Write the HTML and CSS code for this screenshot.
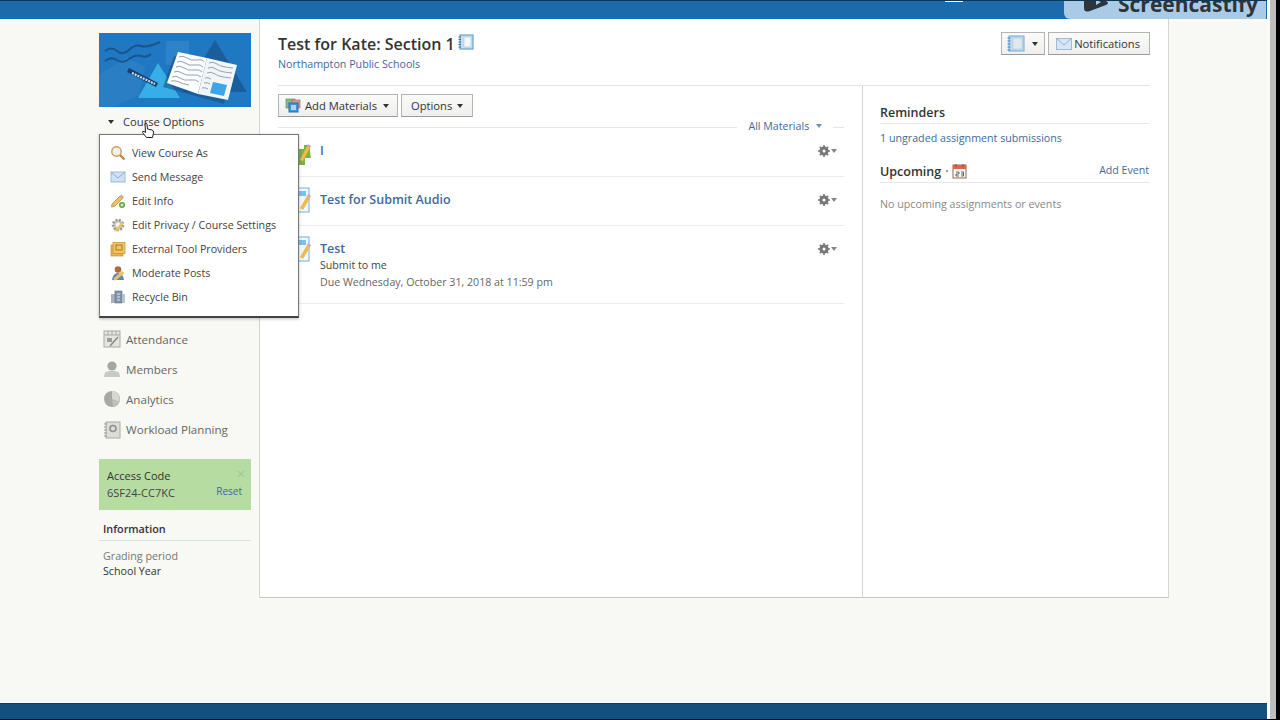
FILE: index.html
```html
<!DOCTYPE html>
<html lang="en">
<head>
  <meta charset="UTF-8">
  <title>Test for Kate: Section 1</title>
  <link rel="stylesheet" href="styles.css">
</head>
<body>
  <div class="window">
    <div class="page">
      <header class="topbar">
        <span class="topbar-mark"></span>
        <div class="recorder">
          <svg class="recorder-icon" width="30" height="14" viewBox="0 0 30 14"><path d="M2 -8 L24 1 Q28 3 24 5 L8 11 Q2 13 2 8 Z" fill="#2f3438"/><path d="M14 0 L19 2 L14 5 Z" fill="#a9cbe8"/></svg>
          <span class="recorder-name">Screencastify</span>
        </div>
      </header>

      <div class="content">
        <aside class="sidebar">
          <svg class="banner" width="152" height="74" viewBox="0 0 152 74">
            <rect width="152" height="74" fill="#1f78c1"/>
            <path d="M0 42 L28 24 L46 34 L40 62 L14 74 L0 74 Z" fill="#2a7fc4"/>
            <rect x="67" y="8" width="23" height="24" fill="#2d83c9"/>
            <path d="M116 7 L148 59 L84 59 Z" fill="#1a5f9c"/>
            <path d="M59 30 L81 65 L39 65 Z" fill="#38aee8"/>
            <path d="M6 18 Q12 13 18 18 T30 17 T42 13 T61 9" fill="none" stroke="#18558f" stroke-width="2"/>
            <path d="M6 28 Q12 23 18 27 T30 26 T42 23 T52 21" fill="none" stroke="#18558f" stroke-width="2"/>
            <path d="M29 37 L58 52" stroke="#12406f" stroke-width="4.5"/>
            <path d="M33 40 L56 51" stroke="#cfe0ee" stroke-width="2.2" stroke-dasharray="2 1"/>
            <path d="M79 19 L138 32 L129 67 L68 50 Z" fill="#14528a" opacity=".6" transform="translate(-4 4)"/>
            <path d="M79 19 L108 25 L99 61 L68 50 Z" fill="#fbfcfd"/>
            <path d="M108 25 L138 32 L129 67 L99 61 Z" fill="#f1f5f8"/>
            <g fill="none" stroke="#8d99a6" stroke-width=".9">
              <path d="M80 24 Q84 22 88 25 T98 27 T105 29"/>
              <path d="M78 29 Q82 27 86 30 T96 32 T104 34"/>
              <path d="M77 34 Q81 32 85 35 T95 37 T103 39"/>
              <path d="M75 39 Q79 37 83 40 T93 42 T102 44"/>
              <path d="M73 44 Q77 42 81 45 T91 47 T100 49"/>
              <path d="M72 48 Q76 47 80 49 T90 52"/>
              <path d="M110 30 Q114 28 118 31 T134 35"/>
              <path d="M109 35 Q113 33 117 36 T133 40"/>
              <path d="M108 40 Q112 38 116 41 T132 45"/>
              <path d="M106 45 Q109 44 112 46"/>
              <path d="M105 50 Q108 49 111 51"/>
              <path d="M103 55 Q106 54 109 56"/>
            </g>
            <path d="M114 49 L128 52 L125 63 L111 60 Z" fill="#3ea6e8"/>
          </svg>

          <div class="course-options">
            <span class="caret caret-dark"></span>
            <span>Course Options</span>
          </div>

          <div class="course-menu">
            <a class="menu-item">
              <svg width="16" height="16" viewBox="0 0 16 16"><circle cx="6.5" cy="6.5" r="4.7" fill="#f4f1e6" stroke="#c99a5b" stroke-width="1.4"/><path d="M10 10 L14.5 14.5" stroke="#b98a4c" stroke-width="2.4"/></svg>
              <span>View Course As</span>
            </a>
            <a class="menu-item">
              <svg width="16" height="16" viewBox="0 0 16 16"><rect x="1" y="3" width="14" height="10" fill="#cfe1f4" stroke="#9dbbd8"/><path d="M1 3 L8 9 L15 3" fill="none" stroke="#8fb0d0"/></svg>
              <span>Send Message</span>
            </a>
            <a class="menu-item">
              <svg width="16" height="16" viewBox="0 0 16 16"><path d="M2 11 L10 3 L13 5 L5 13 L1.5 14 Z" fill="#eec25f" stroke="#a8803a" stroke-width=".7"/><path d="M10 3 L11.5 1.5 L14 4 L13 5 Z" fill="#d7a1c6"/><circle cx="12" cy="12" r="3" fill="#5aa63a"/><path d="M10.5 12 H13.5 M12 10.5 V13.5" stroke="#fff" stroke-width="1"/></svg>
              <span>Edit Info</span>
            </a>
            <a class="menu-item">
              <svg width="16" height="16" viewBox="0 0 16 16"><circle cx="8" cy="8" r="5" fill="#c8c8c4" stroke="#9a9a96" stroke-width="2.6" stroke-dasharray="2 1.4"/><circle cx="8" cy="8" r="2.4" fill="#f2f2ee"/><path d="M5 13 L12 5 L14 6.5 L7 14 L4.5 14.5 Z" fill="#eec25f"/></svg>
              <span>Edit Privacy / Course Settings</span>
            </a>
            <a class="menu-item">
              <svg width="16" height="16" viewBox="0 0 16 16"><rect x="1" y="4" width="12" height="11" fill="#e5b54e" stroke="#c08f2e" stroke-width=".7"/><rect x="3" y="1.5" width="12" height="11" fill="#f0c463" stroke="#c08f2e" stroke-width=".7"/><rect x="6" y="4" width="6" height="5" fill="none" stroke="#a87a20"/></svg>
              <span>External Tool Providers</span>
            </a>
            <a class="menu-item">
              <svg width="16" height="16" viewBox="0 0 16 16"><circle cx="8" cy="4.5" r="3.3" fill="#a86e3c"/><path d="M2 15 Q3 8 8 8 Q13 8 14 15 Z" fill="#5b86b8"/><path d="M4 13 L12 6 L14.5 8 L6.5 15 L3.5 15.5 Z" fill="#eec25f"/></svg>
              <span>Moderate Posts</span>
            </a>
            <a class="menu-item">
              <svg width="16" height="16" viewBox="0 0 16 16"><rect x="1" y="5" width="4" height="9" fill="#a8b3bd"/><rect x="5" y="2" width="7" height="12" fill="#7f95a8" stroke="#5f7486" stroke-width=".6"/><rect x="12" y="5" width="3" height="9" fill="#b9c3cb"/><path d="M7 5 H10 M7 8 H10 M7 11 H10" stroke="#dfe6ec"/></svg>
              <span>Recycle Bin</span>
            </a>
          </div>

          <nav class="course-nav">
            <a class="nav-item">
              <svg width="18" height="18" viewBox="0 0 18 18"><rect x="1" y="1" width="16" height="16" fill="#e4e4e0" stroke="#a9a9a5"/><path d="M1 5 H17 M5 1 V5 M9 1 V5 M13 1 V5" stroke="#a9a9a5"/><rect x="4" y="8" width="5" height="4" fill="#9c9c98"/><path d="M7 16 L15 7" stroke="#8b8b87" stroke-width="1.6"/></svg>
              <span>Attendance</span>
            </a>
            <a class="nav-item">
              <svg width="18" height="18" viewBox="0 0 18 18"><circle cx="9" cy="6" r="4.6" fill="#a5a5a1"/><path d="M1 17 Q1 11 6 11 H12 Q17 11 17 17 Z" fill="#c9c9c5"/></svg>
              <span>Members</span>
            </a>
            <a class="nav-item">
              <svg width="18" height="18" viewBox="0 0 18 18"><circle cx="9" cy="9" r="8" fill="#a8a8a4"/><path d="M9 9 V1 A8 8 0 0 1 16 12 Z" fill="#d6d6d2"/><path d="M9 9 L16 12 A8 8 0 0 1 10 17 Z" fill="#bfbfbb"/></svg>
              <span>Analytics</span>
            </a>
            <a class="nav-item">
              <svg width="18" height="18" viewBox="0 0 18 18"><rect x="3" y="1" width="14" height="16" fill="#dcdcd8" stroke="#aaaaa6"/><path d="M1 3 H4 M1 6 H4 M1 9 H4 M1 12 H4 M1 15 H4" stroke="#9a9a96"/><circle cx="10" cy="7.5" r="3" fill="none" stroke="#8f8f8b" stroke-width="1.6"/></svg>
              <span>Workload Planning</span>
            </a>
          </nav>

          <div class="access-code">
            <div class="access-label">Access Code</div>
            <div class="access-value">6SF24-CC7KC</div>
            <span class="access-close">&#215;</span>
            <a class="access-reset">Reset</a>
          </div>

          <section class="info">
            <h3>Information</h3>
            <div class="info-label">Grading period</div>
            <div class="info-value">School Year</div>
          </section>

          <svg class="hand-cursor" width="14" height="18" viewBox="0 0 14 18"><path d="M4 1.5 Q5.5 .5 6 2 L6.5 7 L11 8 Q13 8.5 12.5 11 L11.5 15.5 H5.5 L1.5 10.5 Q1 9 3 9.5 L4.5 10.5 Z" fill="#fff" stroke="#222" stroke-width="1"/></svg>
        </aside>

        <main class="panel">
          <div class="panel-head">
            <div>
              <h1 class="course-title">
                <span>Test for Kate: Section 1</span>
                <svg width="16" height="16" viewBox="0 0 16 16"><rect x="2" y="1" width="13" height="14" fill="#c4e0f6" stroke="#4f94ce"/><rect x="6" y="3" width="7" height="10" fill="#f4f7fa" stroke="#a9c6e0" stroke-width=".6"/><path d="M0.5 3 H3 M0.5 5.5 H3 M0.5 8 H3 M0.5 10.5 H3 M0.5 13 H3" stroke="#3f6f98"/></svg>
              </h1>
              <a class="school-link">Northampton Public Schools</a>
            </div>
            <div class="head-actions">
              <button class="btn btn-icon">
                <svg width="18" height="17" viewBox="0 0 18 17"><rect x="2" y="1" width="15" height="15" fill="#bcdcf5" stroke="#6eaade"/><rect x="6" y="3" width="9" height="11" fill="#e4e8ea" stroke="#a9c6e0" stroke-width=".6"/><path d="M0.5 3 H3.5 M0.5 6 H3.5 M0.5 9 H3.5 M0.5 12 H3.5 M0.5 15 H3.5" stroke="#4f7fa8"/></svg>
                <span class="caret caret-dark"></span>
              </button>
              <button class="btn btn-notify">
                <svg width="16" height="12" viewBox="0 0 16 12"><rect x=".5" y=".5" width="15" height="11" fill="#d8e6f4" stroke="#9dbbd8"/><path d="M.5 .5 L8 7 L15.5 .5" fill="none" stroke="#8fb0d0"/></svg>
                <span>Notifications</span>
              </button>
            </div>
          </div>

          <div class="panel-body">
            <div class="stream">
              <div class="stream-tools">
                <button class="btn btn-add">
                  <svg width="16" height="15" viewBox="0 0 16 15"><rect x="1" y="1" width="9" height="9" fill="#87b78a" stroke="#6b8f6e" stroke-width=".7"/><rect x="7" y="2" width="8" height="8" fill="#d59a96" stroke="#a5726e" stroke-width=".7"/><rect x="4" y="5" width="9" height="9" fill="#3c98e0" stroke="#2a6da8"/><rect x="6" y="7" width="5" height="5" fill="#a8d6f6"/></svg>
                  <span>Add Materials</span>
                  <span class="caret caret-dark"></span>
                </button>
                <button class="btn btn-plain">
                  <span>Options</span>
                  <span class="caret caret-dark"></span>
                </button>
              </div>

              <div class="filter-row">
                <span class="filter-line"></span>
                <a class="filter-link">All Materials <span class="caret caret-blue"></span></a>
                <span class="filter-line filter-line-end"></span>
              </div>

              <article class="material material-first">
                <svg class="material-icon" width="24" height="26" viewBox="0 0 24 26"><path d="M10 8 H17 V4 H23 V11 L24 17 H18 V24 H10 Z" fill="#7cb342"/><path d="M13 19 L20 5 L23 7 L16 20 Z" fill="#f0b94f"/><path d="M20 5 L21 3 L24 5 L23 7 Z" fill="#cfa0c8"/></svg>
                <div class="material-text">
                  <a class="material-title">I</a>
                </div>
                <span class="gear"><svg width="12" height="12" viewBox="0 0 12 12"><circle cx="6" cy="6" r="3.4" fill="none" stroke="#777" stroke-width="2.4"/><path d="M6 0 V12 M0 6 H12 M1.8 1.8 L10.2 10.2 M10.2 1.8 L1.8 10.2" stroke="#777" stroke-width="1.6"/><circle cx="6" cy="6" r="1.5" fill="#fff"/></svg><span class="caret caret-gray"></span></span>
              </article>

              <article class="material">
                <svg class="material-icon" width="24" height="26" viewBox="0 0 24 26"><rect x="1" y="1" width="21" height="24" fill="#f2f8fd" stroke="#6fb0e0"/><rect x="4" y="4" width="15" height="5" fill="#7cc0ee"/><path d="M13 21 L20 9 L23 11 L16 23 Z" fill="#f0b94f"/><path d="M20 9 L21 7 L24 9 L23 11 Z" fill="#cfa0c8"/></svg>
                <div class="material-text">
                  <a class="material-title">Test for Submit Audio</a>
                </div>
                <span class="gear"><svg width="12" height="12" viewBox="0 0 12 12"><circle cx="6" cy="6" r="3.4" fill="none" stroke="#777" stroke-width="2.4"/><path d="M6 0 V12 M0 6 H12 M1.8 1.8 L10.2 10.2 M10.2 1.8 L1.8 10.2" stroke="#777" stroke-width="1.6"/><circle cx="6" cy="6" r="1.5" fill="#fff"/></svg><span class="caret caret-gray"></span></span>
              </article>

              <article class="material">
                <svg class="material-icon" width="24" height="26" viewBox="0 0 24 26"><rect x="1" y="1" width="21" height="24" fill="#f2f8fd" stroke="#6fb0e0"/><rect x="4" y="4" width="15" height="5" fill="#7cc0ee"/><path d="M13 21 L20 9 L23 11 L16 23 Z" fill="#f0b94f"/><path d="M20 9 L21 7 L24 9 L23 11 Z" fill="#cfa0c8"/></svg>
                <div class="material-text">
                  <a class="material-title">Test</a>
                  <div class="material-desc">Submit to me</div>
                  <div class="material-due">Due Wednesday, October 31, 2018 at 11:59 pm</div>
                </div>
                <span class="gear"><svg width="12" height="12" viewBox="0 0 12 12"><circle cx="6" cy="6" r="3.4" fill="none" stroke="#777" stroke-width="2.4"/><path d="M6 0 V12 M0 6 H12 M1.8 1.8 L10.2 10.2 M10.2 1.8 L1.8 10.2" stroke="#777" stroke-width="1.6"/><circle cx="6" cy="6" r="1.5" fill="#fff"/></svg><span class="caret caret-gray"></span></span>
              </article>
            </div>

            <div class="side-col">
              <div class="side-heading reminders-heading">Reminders</div>
              <a class="reminder-link">1 ungraded assignment submissions</a>
              <div class="side-heading upcoming-heading">
                <span>Upcoming</span>
                <span class="dot">&#183;</span>
                <svg width="15" height="15" viewBox="0 0 15 15"><rect x="1" y="1" width="13" height="13" fill="#fbfaf6" stroke="#8c6a55"/><rect x="1" y="1" width="13" height="4" fill="#d9694a"/><path d="M4 0 V3 M11 0 V3" stroke="#8c4a35"/><path d="M4 8 H7 V10 H4 V12 H7 M9 8 H11.5 V12 H9 M9 10 H11.5" fill="none" stroke="#555" stroke-width=".9"/></svg>
                <a class="add-event">Add Event</a>
              </div>
              <p class="no-upcoming">No upcoming assignments or events</p>
            </div>
          </div>
        </main>
      </div>

      <footer class="footer"></footer>
    </div>
    <div class="scrollbar"></div>
  </div>
</body>
</html>
```

FILE: styles.css
```css
* {
  box-sizing: border-box;
}
html, body {
  margin: 0;
  height: 100%;
  overflow: hidden;
}
body {
  font-family: "Open Sans", "Liberation Sans", sans-serif;
  font-size: 11.2px;
  color: #333;
  background-color: #000;
}
a {
  color: #3f6a9c;
  text-decoration: none;
}
.window {
  display: flex;
  height: 719px;
}
.page {
  width: 1267px;
  display: flex;
  flex-direction: column;
  background-color: #f8f8f4;
}
.scrollbar {
  width: 9px;
  background: linear-gradient(to right, #fbfbf9 0 3px, #bdbdbd 3px);
}

/* top bar */
.topbar {
  position: relative;
  flex: none;
  height: 19px;
  background-color: #1b6bab;
  border-top: 1px solid #0d3555;
  overflow: hidden;
}
.topbar-mark {
  position: absolute;
  left: 945px;
  top: -1px;
  width: 18px;
  height: 2px;
  background-color: #fff;
}
.recorder {
  position: absolute;
  right: 1px;
  top: -1px;
  width: 202px;
  height: 19px;
  display: flex;
  padding-left: 18px;
  gap: 6px;
  background-color: #a9cbe8;
  border-bottom-left-radius: 6px;
  overflow: hidden;
}
.recorder-icon {
  flex: none;
}
.recorder-name {
  font-size: 21px;
  font-weight: 700;
  line-height: 18px;
  margin-top: -5px;
  color: #2f3438;
}

/* layout */
.content {
  position: relative;
  flex: 1;
  display: flex;
  padding-left: 99px;
  min-height: 0;
}
.footer {
  flex: none;
  height: 16px;
  background-color: #14507e;
  border-top: 1px solid #0f3f66;
}

/* sidebar */
.sidebar {
  position: relative;
  width: 152px;
  margin-right: 8px;
  padding-top: 14px;
}
.banner {
  display: block;
}
.course-options {
  display: flex;
  align-items: center;
  gap: 9px;
  margin-top: 6px;
  padding-left: 9px;
  height: 17px;
  color: #333;
}
.caret {
  display: inline-block;
  width: 0;
  height: 0;
  border-left: 3.5px solid transparent;
  border-right: 3.5px solid transparent;
  border-top: 4px solid #333;
}
.caret-blue {
  border-top-color: #6f93b8;
  margin-left: 4px;
  vertical-align: 2px;
}
.caret-gray {
  border-top-color: #888;
  margin-left: 1px;
  vertical-align: 3px;
}
.course-menu {
  position: absolute;
  left: 0;
  top: 115px;
  z-index: 5;
  width: 200px;
  height: 184px;
  padding: 6px 0 0 10px;
  background-color: #fff;
  border: 1px solid #777;
  border-bottom-width: 2px;
  border-bottom-color: #444;
  box-shadow: 0 1px 3px rgba(0,0,0,0.25);
}
.menu-item {
  display: flex;
  align-items: center;
  gap: 6px;
  height: 24px;
  color: #444;
  font-size: 10.7px;
}
.course-nav {
  margin-top: 194px;
}
.nav-item {
  display: flex;
  align-items: center;
  gap: 5px;
  height: 30.2px;
  padding-left: 4px;
  color: #666;
  font-size: 11.6px;
}
.access-code {
  position: relative;
  height: 51px;
  margin-top: 14px;
  padding: 8px 8px;
  background-color: #b6dca2;
  font-size: 11px;
  line-height: 17px;
}
.access-label {
  color: #333;
}
.access-value {
  color: #444;
}
.access-close {
  position: absolute;
  right: 6px;
  top: 7px;
  color: #9fc7a4;
  font-size: 15px;
  line-height: 15px;
}
.access-reset {
  position: absolute;
  right: 9px;
  bottom: 11px;
  font-size: 10px;
  line-height: 16px;
}
.info {
  margin-top: 10px;
}
.info h3 {
  margin: 0 0 8px;
  padding: 0 0 2px 4px;
  border-bottom: 1px solid #d6e2e2;
  font-size: 10.8px;
  font-weight: 600;
  line-height: 18px;
  color: #333;
}
.info-label, .info-value {
  padding-left: 4px;
  line-height: 15px;
  font-size: 10.7px;
}
.info-label {
  color: #777;
}
.hand-cursor {
  position: absolute;
  left: 42px;
  top: 103px;
  z-index: 6;
}

/* main panel */
.panel {
  width: 910px;
  height: 579px;
  display: flex;
  flex-direction: column;
  padding: 0 18px;
  background-color: #fff;
  border-left: 1px solid #d4d4d0;
  border-right: 1px solid #d4d4d0;
  border-bottom: 1px solid #c8c8c4;
}
.panel-head {
  flex: none;
  display: flex;
  justify-content: space-between;
  height: 67px;
  padding-top: 14px;
  border-bottom: 1px solid #e4e4e2;
}
.course-title {
  display: flex;
  align-items: center;
  gap: 3px;
  margin: 0;
  font-size: 16px;
  font-weight: 600;
  line-height: 22px;
  color: #333;
}
.course-title svg {
  margin-top: -4px;
}
.school-link {
  display: block;
  margin-top: 1px;
  font-size: 10.7px;
  line-height: 16px;
}
.head-actions {
  display: flex;
  align-items: flex-start;
  gap: 3px;
  margin-top: -1px;
}
.btn {
  display: inline-flex;
  align-items: center;
  gap: 5px;
  height: 23px;
  padding: 0 9px;
  background: linear-gradient(#fafaf9, #efefed);
  border: 1px solid #b4b4b4;
  border-bottom-color: #999;
  font-family: inherit;
  font-size: 11.2px;
  color: #333;
}
.btn-icon {
  gap: 7px;
  padding: 0 6px 0 5px;
}
.btn-notify {
  gap: 2px;
  padding: 0 9px 0 7px;
}
.btn-add {
  gap: 4px;
  padding: 0 8px 0 6px;
}
.btn-add .caret {
  margin-left: 2px;
}
.panel-body {
  flex: 1;
  display: flex;
  min-height: 0;
}
.stream {
  flex: none;
  width: 584px;
  padding-right: 18px;
}
.stream-tools {
  display: flex;
  gap: 3px;
  padding-top: 8px;
}
.filter-row {
  display: flex;
  align-items: center;
  gap: 11px;
  height: 20px;
}
.filter-line {
  flex: 1;
  height: 1px;
  background-color: #e6e6e4;
}
.filter-line-end {
  flex: none;
  width: 11px;
}
.filter-link {
  margin-top: -2px;
  font-size: 10.65px;
}
.material {
  position: relative;
  display: flex;
  min-height: 49px;
  padding: 14px 0 12px 9px;
  border-bottom: 1px solid #ececea;
}
.material-first {
  min-height: 40px;
  padding-top: 5px;
}
.material-icon {
  flex: none;
  margin: -4px 9px -10px 0;
}
.material-first .material-icon {
  margin-top: -1px;
}
.material-text {
  flex: 1;
  font-size: 10.65px;
  line-height: 17px;
}
.material-title {
  display: block;
  font-size: 12.5px;
  font-weight: 600;
  line-height: 17px;
}
.material-desc {
  color: #444;
}
.material-due {
  color: #666;
}
.gear {
  position: absolute;
  right: 7px;
  top: 17px;
  display: flex;
  align-items: center;
}
.material-first .gear {
  top: 8px;
}
.side-col {
  flex: 1;
  padding: 16px 1px 0 17px;
  border-left: 1px solid #d4d4d0;
  min-width: 0;
}
.side-heading {
  display: flex;
  align-items: center;
  font-size: 12.5px;
  font-weight: 600;
  color: #333;
  border-bottom: 1px solid #e8e8e6;
}
.reminders-heading {
  height: 22px;
}
.reminder-link {
  display: block;
  margin-top: 6px;
  font-size: 10.7px;
  line-height: 17px;
}
.upcoming-heading {
  height: 23px;
  margin-top: 13px;
}
.dot {
  margin: 0 3px 0 4px;
  color: #777;
}
.add-event {
  margin-left: auto;
  margin-top: -3px;
  font-size: 10.6px;
  font-weight: 400;
}
.no-upcoming {
  margin: 13px 0 0;
  font-size: 10.7px;
  line-height: 17px;
  color: #888;
}
```
